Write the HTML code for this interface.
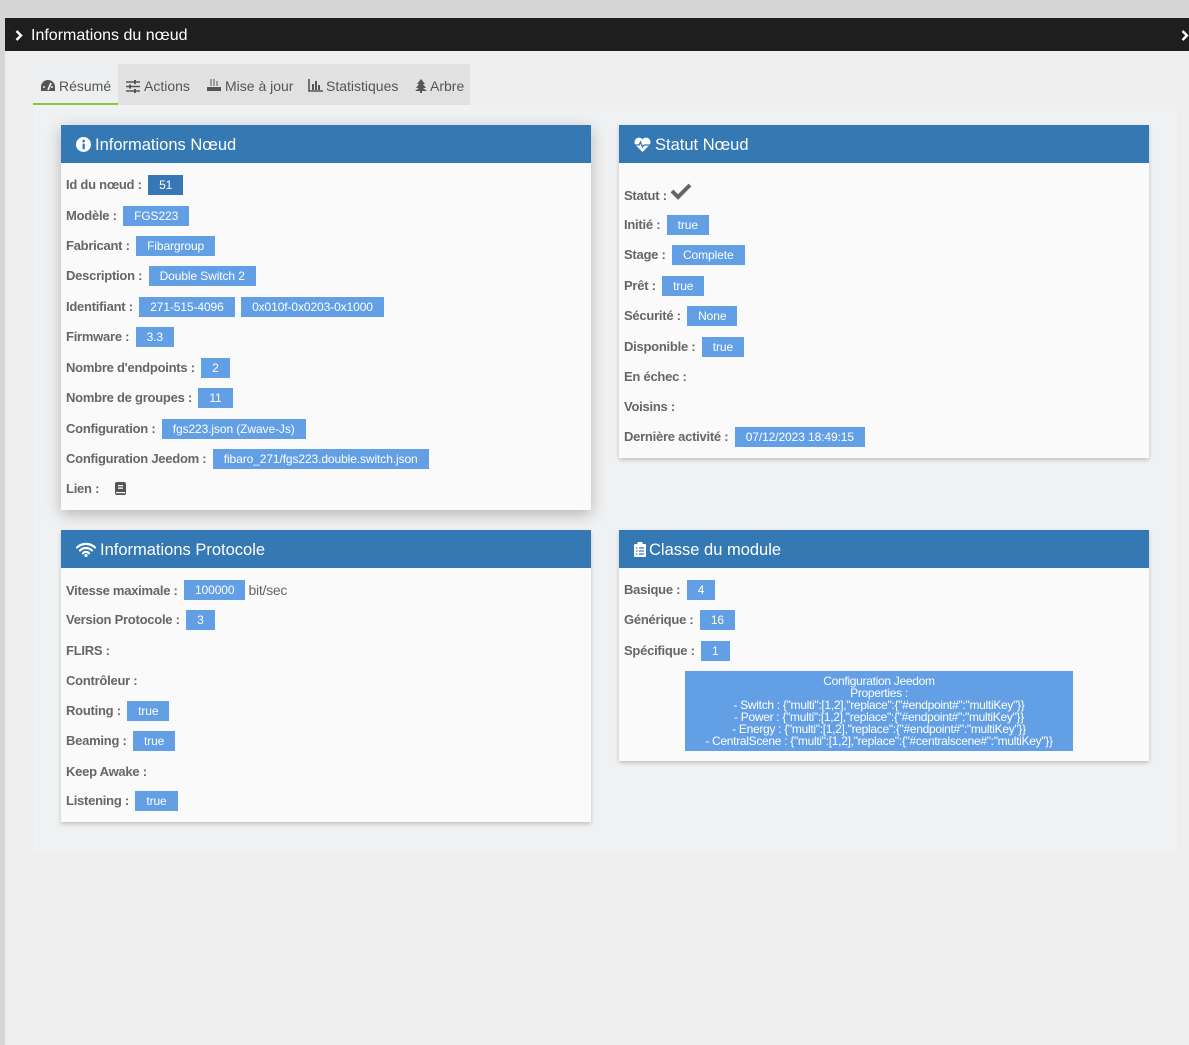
<!DOCTYPE html>
<html><head><meta charset="utf-8">
<style>
*{box-sizing:border-box;margin:0;padding:0}
html{overflow:hidden}
body{width:1189px;height:1045px;background:#d5d5d5;font-family:"Liberation Sans",sans-serif;position:relative;overflow:hidden}
.modal{position:absolute;left:5px;top:18px;width:1184px;height:1027px;background:#edeeed}
.hdr{position:absolute;left:0;top:0;width:100%;height:33px;background:#1e1e1e;color:#fff;font-size:16px;line-height:35px;padding-left:26px}
.hdr svg{position:absolute;top:12px}
.tabs{position:absolute;left:33px;top:64px;width:437px;height:41px;background:#e0e1e0}
.tab{position:absolute;top:0;height:41px;line-height:44px;font-size:14px;color:#555;white-space:nowrap}
.tab svg{margin-right:3px}
.tab.act{background:#eeeff0;border-bottom:2px solid #8dc63f}
.content{position:absolute;left:33px;top:105px;width:1144px;height:748px;background:#f0f1f2}
.panel{position:absolute;width:530px;background:#fafafa;box-shadow:0 2px 4px rgba(0,0,0,.2)}
.ph{height:38px;background:#3478b4;color:#fff;font-size:16.5px;line-height:41px;padding-left:15px;white-space:nowrap}
.ph svg{vertical-align:-2px;margin-right:4px}
.row{position:absolute;left:5px;height:20px;line-height:20px;white-space:nowrap;font-size:13px;font-weight:bold;color:#666;letter-spacing:-.25px}
.b{display:inline-block;background:#629fe5;color:#fff;font-weight:normal;font-size:12px;height:20px;line-height:21px;padding:0 11px;margin-left:3px;vertical-align:top;letter-spacing:-.1px}
.b.d{background:#3777b5}
.plain{font-weight:normal;font-size:14px;color:#666;margin-left:3px}
.cfg{position:absolute;left:66px;top:141px;width:388px;height:80px;background:#629fe5;color:#fff;font-size:12px;line-height:12px;text-align:center;padding-top:4px;letter-spacing:-.3px;white-space:nowrap}
</style></head><body>
<div class="modal">
 <div class="hdr"><svg style="left:10px" width="8" height="11" viewBox="0 0 8 11"><path d="M1.5 1l4.5 4.5L1.5 10" stroke="#fff" stroke-width="2.4" fill="none"/></svg>Informations du nœud<svg style="left:1176px" width="8" height="11" viewBox="0 0 8 11"><path d="M1.5 1l4.5 4.5L1.5 10" stroke="#fff" stroke-width="2.4" fill="none"/></svg></div>
</div>
<div class="tabs">
 <div class="tab act" style="left:0;width:85px;padding-left:7px">
  <svg width="16" height="14" viewBox="0 0 16 14" style="vertical-align:-2px"><path d="M8 1A7 7 0 0 0 1 8v4h14V8A7 7 0 0 0 8 1z" fill="#555"/><path d="M8 11L11 4" stroke="#eeeff0" stroke-width="1.8"/><circle cx="4" cy="8" r="1" fill="#eeeff0"/><circle cx="12" cy="8" r="1" fill="#eeeff0"/></svg>Résumé</div>
 <div class="tab" style="left:92px">
  <svg width="16" height="13" viewBox="0 0 16 13" style="vertical-align:-2px"><path d="M1 2h14M1 6.5h14M1 11h14" stroke="#555" stroke-width="1.6"/><rect x="9" y="0" width="2" height="4" fill="#555"/><rect x="4" y="4.5" width="2" height="4" fill="#555"/><rect x="9" y="9" width="2" height="4" fill="#555"/></svg>Actions</div>
 <div class="tab" style="left:173px">
  <svg width="16" height="14" viewBox="0 0 16 14" style="vertical-align:-1px"><rect x="1" y="9" width="14" height="4" fill="#555"/><path d="M5 1v7M8 1v7M11 3v5" stroke="#555" stroke-width="1"/></svg>Mise à jour</div>
 <div class="tab" style="left:275px">
  <svg width="15" height="13" viewBox="0 0 15 13" style="vertical-align:-1px"><path d="M1 0v12h14" stroke="#555" stroke-width="1.6" fill="none"/><rect x="4" y="5" width="2" height="6" fill="#555"/><rect x="7" y="2" width="2" height="9" fill="#555"/><rect x="10" y="6" width="2" height="5" fill="#555"/></svg>Statistiques</div>
 <div class="tab" style="left:382px">
  <svg width="12" height="14" viewBox="0 0 12 14" style="vertical-align:-2px"><path d="M6 0L2 5h2L1 9h3L0 12h5v2h2v-2h5L8 9h3L8 5h2z" fill="#555"/></svg>Arbre</div>
</div>
<div class="content"></div>

<div class="panel" style="left:61px;top:125px;height:385px;box-shadow:0 4px 14px rgba(0,0,0,.25)">
 <div class="ph"><svg width="15" height="15" viewBox="0 0 16 16"><circle cx="8" cy="8" r="8" fill="#fff"/><rect x="7" y="7" width="2.4" height="6" fill="#3478b4"/><circle cx="8.2" cy="4.3" r="1.4" fill="#3478b4"/></svg>Informations Nœud</div>
 <div class="row" style="top:50px">Id du nœud : <span class="b d">51</span></div>
 <div class="row" style="top:81px">Modèle : <span class="b">FGS223</span></div>
 <div class="row" style="top:111px">Fabricant : <span class="b">Fibargroup</span></div>
 <div class="row" style="top:141px">Description : <span class="b">Double Switch 2</span></div>
 <div class="row" style="top:172px">Identifiant : <span class="b">271-515-4096</span> <span class="b">0x010f-0x0203-0x1000</span></div>
 <div class="row" style="top:202px">Firmware : <span class="b">3.3</span></div>
 <div class="row" style="top:233px">Nombre d'endpoints : <span class="b">2</span></div>
 <div class="row" style="top:263px">Nombre de groupes : <span class="b">11</span></div>
 <div class="row" style="top:294px">Configuration : <span class="b">fgs223.json (Zwave-Js)</span></div>
 <div class="row" style="top:324px">Configuration Jeedom : <span class="b">fibaro_271/fgs223.double.switch.json</span></div>
 <div class="row" style="top:354px">Lien : <svg width="11" height="13" viewBox="0 0 11 13" style="vertical-align:-2px;margin-left:12px"><rect x="0" y="0" width="11" height="13" rx="2" fill="#555"/><rect x="3" y="3" width="5" height="1.3" fill="#fafafa"/><rect x="3" y="5.5" width="5" height="1.3" fill="#fafafa"/><rect x="1" y="10" width="9" height="1.2" fill="#fafafa"/></svg></div>
</div>

<div class="panel" style="left:619px;top:125px;height:333px">
 <div class="ph"><svg width="17" height="15" viewBox="0 0 17 15"><path d="M8.5 15L1.5 8A4.2 4.2 0 0 1 8.5 2.3A4.2 4.2 0 0 1 15.5 8z" fill="#fff"/><path d="M1 8h4l1.5-3 2 5 1.5-2h6" stroke="#3478b4" stroke-width="1.3" fill="none"/></svg>Statut Nœud</div>
 <div class="row" style="top:57px">Statut : <svg width="22" height="18" viewBox="0 0 22 18" style="vertical-align:0"><path d="M2 9l6 6L20 3" stroke="#666" stroke-width="4" fill="none"/></svg></div>
 <div class="row" style="top:90px">Initié : <span class="b">true</span></div>
 <div class="row" style="top:120px">Stage : <span class="b">Complete</span></div>
 <div class="row" style="top:151px">Prêt : <span class="b">true</span></div>
 <div class="row" style="top:181px">Sécurité : <span class="b">None</span></div>
 <div class="row" style="top:212px">Disponible : <span class="b">true</span></div>
 <div class="row" style="top:242px">En échec :</div>
 <div class="row" style="top:272px">Voisins :</div>
 <div class="row" style="top:302px">Dernière activité : <span class="b">07/12/2023 18:49:15</span></div>
</div>

<div class="panel" style="left:61px;top:530px;height:292px">
 <div class="ph"><svg width="20" height="15" viewBox="0 0 20 15"><path d="M1 5.5a13 13 0 0 1 18 0M4 8.5a8.5 8.5 0 0 1 12 0M7 11.3a4 4 0 0 1 6 0" stroke="#fff" stroke-width="2.2" fill="none" stroke-linecap="round"/><circle cx="10" cy="13.5" r="1.6" fill="#fff"/></svg>Informations Protocole</div>
 <div class="row" style="top:50px">Vitesse maximale : <span class="b">100000</span><span class="plain">bit/sec</span></div>
 <div class="row" style="top:80px">Version Protocole : <span class="b">3</span></div>
 <div class="row" style="top:111px">FLIRS :</div>
 <div class="row" style="top:141px">Contrôleur :</div>
 <div class="row" style="top:171px">Routing : <span class="b">true</span></div>
 <div class="row" style="top:201px">Beaming : <span class="b">true</span></div>
 <div class="row" style="top:232px">Keep Awake :</div>
 <div class="row" style="top:261px">Listening : <span class="b">true</span></div>
</div>

<div class="panel" style="left:619px;top:530px;height:231px">
 <div class="ph"><svg width="12" height="15" viewBox="0 0 12 15" style="margin-right:3px"><rect x="0" y="2" width="12" height="13" rx="1" fill="#fff"/><rect x="3.5" y="0" width="5" height="3" fill="#fff"/><path d="M2 6h1.5M5 6h5M2 9h1.5M5 9h5M2 12h1.5M5 12h5" stroke="#3478b4" stroke-width="1.3"/></svg>Classe du module</div>
 <div class="row" style="top:50px">Basique : <span class="b">4</span></div>
 <div class="row" style="top:80px">Générique : <span class="b">16</span></div>
 <div class="row" style="top:111px">Spécifique : <span class="b">1</span></div>
 <div class="cfg">Configuration Jeedom<br>Properties :<br>- Switch : {"multi":[1,2],"replace":{"#endpoint#":"multiKey"}}<br>- Power : {"multi":[1,2],"replace":{"#endpoint#":"multiKey"}}<br>- Energy : {"multi":[1,2],"replace":{"#endpoint#":"multiKey"}}<br>- CentralScene : {"multi":[1,2],"replace":{"#centralscene#":"multiKey"}}</div>
</div>
</body></html>
